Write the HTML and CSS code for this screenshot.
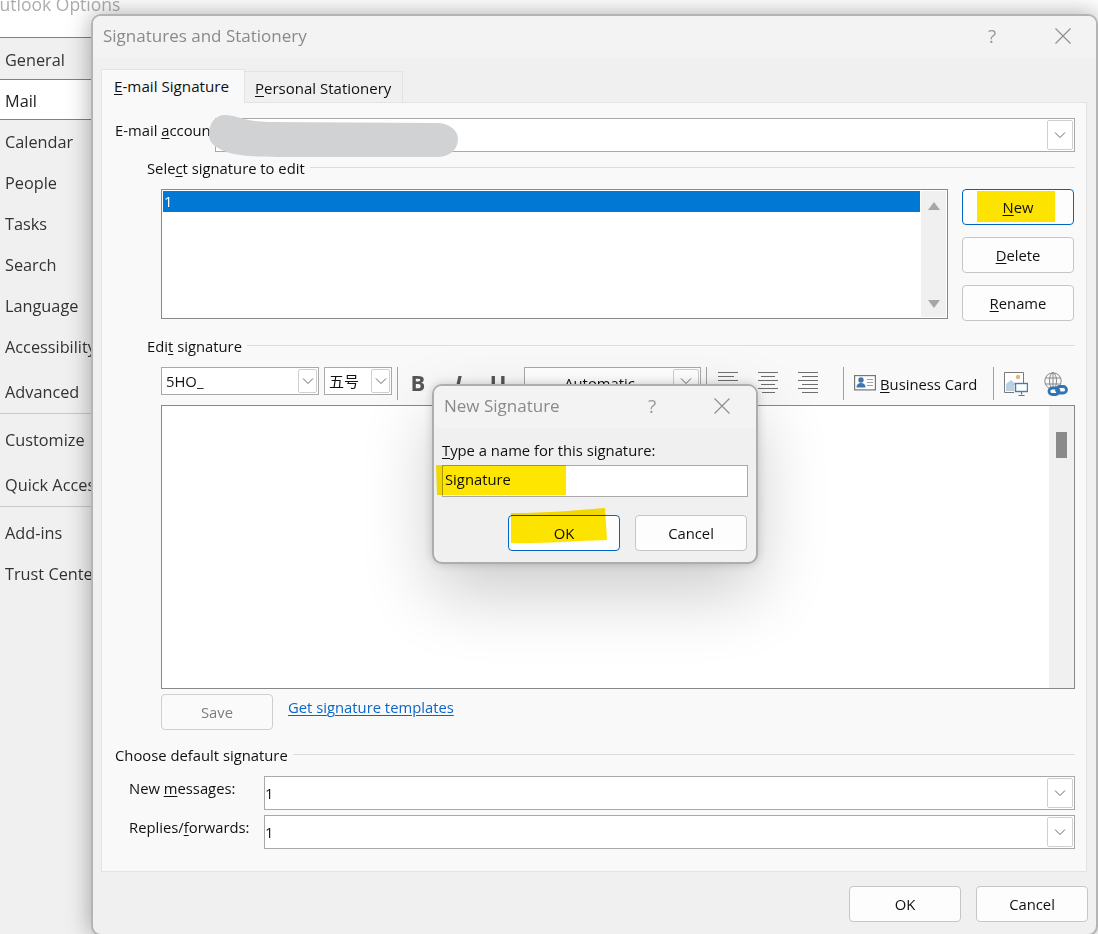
FILE: index.html
```html
<!DOCTYPE html>
<html lang="en">
<head>
<meta charset="utf-8">
<title>Signatures and Stationery</title>
<link rel="stylesheet" href="styles.css">
</head>
<body>
<svg class="defs" width="0" height="0" aria-hidden="true">
  <symbol id="chev" viewBox="0 0 12 8"><path d="M1 1.5 6 6.5 11 1.5" fill="none" stroke="#666" stroke-width="1"/></symbol>
  <symbol id="close" viewBox="0 0 16 16"><path d="M.5.5 15.5 15.5M15.5.5.5 15.5" fill="none" stroke="#8f8f8f" stroke-width="1.2"/></symbol>
</svg>
<div class="desktop">
  <section class="options">
    <div class="options-title">Outlook Options</div>
    <nav class="nav">
      <div class="nav-item nav-first">General</div>
      <div class="nav-item nav-active">Mail</div>
      <div class="nav-item">Calendar</div>
      <div class="nav-item">People</div>
      <div class="nav-item">Tasks</div>
      <div class="nav-item">Search</div>
      <div class="nav-item">Language</div>
      <div class="nav-item">Accessibility</div>
      <div class="nav-item nav-advanced nav-sep">Advanced</div>
      <div class="nav-item nav-customize">Customize</div>
      <div class="nav-item nav-quick nav-sep">Quick Access Toolbar</div>
      <div class="nav-item nav-addins">Add-ins</div>
      <div class="nav-item nav-trust">Trust Center</div>
    </nav>
  </section>

  <section class="dialog">
    <header class="titlebar">
      <span class="title">Signatures and Stationery</span>
      <span class="help help-main">?</span>
      <svg class="close close-main"><use href="#close"/></svg>
    </header>
    <div class="tabs">
      <div class="tab tab-active"><u>E</u>-mail Signature</div>
      <div class="tab tab-plain"><u>P</u>ersonal Stationery</div>
    </div>
    <div class="panel">
      <div class="account-row">
        <span class="account-label">E-mail <u>a</u>ccount:</span>
        <div class="combo account-combo"><span class="chev-btn"><svg class="chev"><use href="#chev"/></svg></span></div>
      </div>

      <div class="group-head group-sub"><span>Sele<u>c</u>t signature to edit</span><i class="rule"></i></div>
      <div class="sig-row">
        <div class="listbox">
          <div class="list-items"><div class="list-selected">1</div></div>
          <div class="list-scroll">
            <svg class="tri" viewBox="0 0 12 8"><path d="M6 0 12 8H0Z" fill="#a6a6a6"/></svg>
            <svg class="tri" viewBox="0 0 12 8"><path d="M0 0H12L6 8Z" fill="#a6a6a6"/></svg>
          </div>
        </div>
        <div class="sig-buttons">
          <button class="btn btn-focus"><u>N</u>ew</button>
          <button class="btn"><u>D</u>elete</button>
          <button class="btn"><u>R</u>ename</button>
        </div>
      </div>

      <div class="group-head group-sub group-edit"><span>Edi<u>t</u> signature</span><i class="rule"></i></div>
      <div class="toolbar">
        <div class="combo tb-font"><span class="combo-text">5HO_</span><span class="chev-btn chev-narrow"><svg class="chev"><use href="#chev"/></svg></span></div>
        <div class="combo tb-size"><span class="combo-text cjk">五号</span><span class="chev-btn chev-narrow"><svg class="chev"><use href="#chev"/></svg></span></div>
        <i class="tb-sep tb-sep-a"></i>
        <span class="fmt">B</span>
        <span class="fmt fmt-i">I</span>
        <span class="fmt fmt-u">U</span>
        <div class="combo tb-color"><span class="color-text">Automatic</span><span class="chev-btn"><svg class="chev"><use href="#chev"/></svg></span></div>
        <i class="tb-sep tb-sep-b"></i>
        <svg class="align" viewBox="0 0 20 21"><path d="M0 .5H20M0 4.500H16M0 8.500H20M0 12.500H16M0 16.500H20M0 20.500H16" stroke="#6e6e6e" fill="none"/></svg>
        <svg class="align" viewBox="0 0 20 21"><path d="M0 .5H20M3 4.500H17M0 8.500H20M3 12.500H17M0 16.500H20M4 20.500H17" stroke="#6e6e6e" fill="none"/></svg>
        <svg class="align" viewBox="0 0 20 21"><path d="M0 .5H20M4 4.500H20M0 8.500H20M4 12.500H20M0 16.500H20M4 20.500H20" stroke="#6e6e6e" fill="none"/></svg>
        <i class="tb-sep tb-sep-c"></i>
        <svg class="card" viewBox="0 0 22 16"><rect x=".6" y=".6" width="20.800" height="14.300" fill="#fff" stroke="#777" stroke-width="1.200"/><circle cx="7" cy="5" r="2.700" fill="#3f76ad"/><path d="M2.500 12.500c0-3 1.500-4.500 4.500-4.500s4.500 1.500 4.500 4.500z" fill="#3f76ad"/><path d="M13 4.500H19M13 7.500H19M13 10.500H19" stroke="#a0a0a0"/></svg>
        <span class="card-text"><u>B</u>usiness Card</span>
        <i class="tb-sep tb-sep-d"></i>
        <svg class="pic" viewBox="0 0 24 24"><path d="M.5 20.500V.5H19.500V11M.5 20.500H10" fill="#fff" stroke="#7a7a7a"/><circle cx="14" cy="5" r="2.200" fill="#e8b679"/><path d="M2 19V12l5-4 5 4v1H10v6z" fill="#bcd0e2"/><rect x="11.500" y="11.500" width="12" height="8" fill="#fff" stroke="#3f7fb8" stroke-width="1.400"/><path d="M17.500 19.500v3M14.500 23.500H20.500" stroke="#3f7fb8" stroke-width="1.200"/></svg>
        <svg class="web" viewBox="0 0 24 24"><g fill="none" stroke="#7d7d7d" stroke-width=".9"><circle cx="9" cy="9" r="8.200"/><ellipse cx="9" cy="9" rx="3.500" ry="8.200"/><path d="M1.500 6H16.500M1.500 12H16.500M9 1V17"/></g><g fill="none" stroke="#2f74b5" stroke-width="2.800"><rect x="5" y="16" width="10" height="6.500" rx="3.250" fill="#fff"/><rect x="12.500" y="14.500" width="10" height="6.500" rx="3.250"/></g></svg>
      </div>

      <div class="editor">
        <div class="editor-body"></div>
        <div class="editor-scroll"><i class="thumb"></i></div>
      </div>
      <div class="save-row">
        <button class="btn btn-disabled">Save</button>
        <a class="link">Get signature templates</a>
      </div>

      <div class="group-head group-choose"><span>Choose default signature</span><i class="rule"></i></div>
      <div class="default-row">
        <span class="default-label">New <u>m</u>essages:</span>
        <div class="combo default-combo"><span class="combo-text">1</span><span class="chev-btn"><svg class="chev"><use href="#chev"/></svg></span></div>
      </div>
      <div class="default-row default-second">
        <span class="default-label">Replies/<u>f</u>orwards:</span>
        <div class="combo default-combo"><span class="combo-text">1</span><span class="chev-btn"><svg class="chev"><use href="#chev"/></svg></span></div>
      </div>
    </div>
    <footer class="footer">
      <button class="btn">OK</button>
      <button class="btn">Cancel</button>
    </footer>
  </section>

  <svg class="blot" viewBox="0 0 250 44"><path d="M16 0C28 0 32 6 60 7L228 8C240 8 249 15 249 24C249 35 240 42 228 42L70 42C40 42 25 40 15 36C5 32 0 27 0 20C0 8 6 0 16 0Z" fill="#d1d2d4"/></svg>

  <section class="newsig">
    <header class="newsig-title">
      <span class="title">New Signature</span>
      <span class="help help-new">?</span>
      <svg class="close close-new"><use href="#close"/></svg>
    </header>
    <div class="newsig-body">
      <div class="newsig-label"><u>T</u>ype a name for this signature:</div>
      <div class="newsig-input">Signature</div>
      <div class="newsig-buttons">
        <button class="btn btn-focus">OK</button>
        <button class="btn">Cancel</button>
      </div>
    </div>
  </section>

  <svg class="marker marker-new" viewBox="0 0 78 31"><rect width="78" height="31"/></svg>
  <svg class="marker marker-input" viewBox="0 0 131 31"><path d="M0 1H130V31H1Z"/></svg>
  <svg class="marker marker-ok" viewBox="0 0 98 37"><path d="M1 5C30 5 60 3 95 0L97 32C60 33 30 36 1 35Z"/></svg>
</div>
</body>
</html>
```
FILE: styles.css
```css
* { box-sizing: border-box; }
html, body { margin: 0; height: 100%; }
body { background: #fff; overflow: hidden; font: 14.8px/20px "Open Sans", "Noto Sans", sans-serif; color: #111; }
.defs { position: absolute; }
u { text-underline-offset: 2px; text-decoration-thickness: 1px; }
i { display: block; font-style: normal; }

.desktop { position: relative; width: 1098px; height: 934px; overflow: hidden; background: #fff; }

/* Back window */
.options { width: 130px; height: 934px; white-space: nowrap; overflow: hidden; }
.options-title { height: 38px; margin-left: -14px; font-size: 17.5px; line-height: 8px; color: #adadad; border-bottom: 1px solid #808080; }
.nav { height: 896px; font-size: 16.3px; color: #333; background: #f0f0f0; }
.nav-item { height: 41px; line-height: 45px; padding-left: 5px; }
.nav-first { height: 42px; line-height: 44px; border-bottom: 1px solid #808080; }
.nav-active { height: 40px; line-height: 43px; background: #fff; color: #222; border-bottom: 1px solid #808080; }
.nav-sep { border-bottom: 1px solid #c8c8c8; }
.nav-advanced { height: 48px; line-height: 53px; }
.nav-customize { height: 46px; line-height: 52px; }
.nav-quick { height: 47px; line-height: 51px; }
.nav-addins { height: 46px; line-height: 52px; }
.nav-trust { line-height: 43px; }

/* Main dialog */
.dialog { position: absolute; left: 91px; top: 14px; width: 1007px; height: 922px; display: flex; flex-direction: column; background: #f0f0f0; border: 2px solid #b4b4b4; border-radius: 10px; box-shadow: 0 0 24px rgba(0,0,0,.34); overflow: hidden; }
.titlebar { position: relative; flex: none; height: 42px; background: #f3f3f3; }
.title { display: block; padding: 9px 0 0 10px; font-size: 17px; line-height: 22px; color: #8a8a8a; }
.help { position: absolute; top: 9px; font-size: 19px; line-height: 22px; color: #9a9a9a; }
.close { position: absolute; top: 12px; width: 16px; height: 16px; }
.help-main { left: 895px; }
.close-main { left: 962px; }

.tabs { display: flex; align-items: flex-end; height: 44px; margin-left: 8px; flex: none; }
.tab { height: 31px; border: 1px solid #e3e3e3; border-bottom: 0; border-left: 0; font-size: 15px; }
.tab-plain { width: 158px; padding: 6px 0 0 10px; }
.tab-active { height: 34px; width: 144px; padding: 6px 0 0 12px; margin-bottom: -1px; font-size: 15.2px; background: #f9f9f9; border-left: 1px solid #e3e3e3; position: relative; z-index: 1; }

.panel { flex: none; width: 986px; height: 770px; margin-left: 8px; padding: 15px 11px 0 13px; background: #f9f9f9; border: 1px solid #e3e3e3; }
.account-row { display: flex; align-items: flex-start; height: 34px; }
.account-label { width: 100px; flex: none; margin-top: 2px; white-space: nowrap; }
.combo { position: relative; display: flex; align-items: center; background: #fff; border: 1px solid #a9a9a9; }
.account-combo { flex: 1; height: 34px; }
.chev-btn { position: absolute; right: 1px; top: 1px; bottom: 1px; width: 26px; display: flex; align-items: center; justify-content: center; background: #fff; border: 1px solid #cfcfcf; border-radius: 2px; }
.chev-narrow { width: 19px; }
.chev { width: 12px; height: 8px; }
.combo-text { padding-left: 4px; }
.cjk { font-family: "Noto Sans CJK SC", sans-serif; font-size: 15px; }

.group-head { display: flex; align-items: center; gap: 5px; white-space: nowrap; }
.rule { flex: 1; height: 1px; background: #dcdcdc; margin-top: -2px; }
.group-sub { padding-left: 32px; margin-top: 6px; }
.group-edit { margin-top: 15px; }
.group-choose { margin-top: 15px; }

.sig-row { display: flex; align-items: flex-start; gap: 14px; margin: 11px 0 0 46px; }
.listbox { display: flex; width: 787px; height: 130px; padding: 1px; background: #fff; border: 1px solid #85888c; }
.list-items { flex: 1; }
.list-selected { height: 21px; padding-left: 1px; line-height: 21px; background: #0078d4; color: #fff; }
.list-scroll { flex: none; width: 25px; margin-left: 1px; background: #f0f0f0; display: flex; flex-direction: column; justify-content: space-between; align-items: center; padding: 11px 0 9px; }
.tri { width: 12px; height: 8px; }
.sig-buttons { display: flex; flex-direction: column; gap: 12px; }

.btn { display: block; width: 112px; height: 36px; padding: 0; font: inherit; color: #111; background: #fdfdfd; border: 1px solid #c6c6c6; border-radius: 4px; }
.btn-focus { border-color: #0067c0; }
.btn-disabled { color: #7d7d7d; border-color: #cfcfcf; background: #fafafa; }

.toolbar { display: flex; align-items: flex-start; height: 33px; margin: 11px 0 0 46px; }
.tb-font { width: 158px; height: 28px; }
.tb-size { width: 68px; height: 28px; margin-left: 5px; }
.tb-sep { flex: none; width: 1px; height: 33px; background: #a0a0a0; }
.tb-sep-a { margin-left: 5px; }
.fmt { flex: none; width: 40px; text-align: center; font-size: 22px; line-height: 30px; font-weight: 700; color: #555; }
.fmt-i { font-style: italic; }
.fmt-u { text-decoration: underline; }
.tb-color { width: 177px; height: 28px; margin-left: 6px; justify-content: center; padding: 4px 28px 0 0; }
.color-text { padding-left: 2px; }
.tb-sep-b { margin-left: 5px; }
.align { flex: none; width: 20px; height: 21px; margin: 5px 0 0 20px; }
.tb-sep-b + .align { margin-left: 11px; }
.tb-sep-c { margin-left: 25px; }
.card { flex: none; width: 22px; height: 16px; margin: 8px 0 0 10px; }
.card-text { margin: 7px 0 0 4px; }
.tb-sep-d { margin-left: 16px; }
.pic { flex: none; width: 24px; height: 24px; margin: 5px 0 0 10px; }
.web { flex: none; width: 24px; height: 24px; margin: 5px 0 0 16px; }

.editor { display: flex; height: 284px; margin: 5px 0 0 46px; background: #fff; border: 1px solid #85888c; }
.editor-body { flex: 1; }
.editor-scroll { flex: none; width: 25px; padding: 26px 0 0 7px; background: #f0f0f0; }
.thumb { width: 11px; height: 26px; background: #8a8a8a; }

.save-row { display: flex; align-items: flex-start; gap: 15px; margin: 5px 0 0 46px; }
.link { margin-top: 3px; color: #0a66c8; text-decoration: underline; text-decoration-thickness: 1px; text-underline-offset: 2px; }

.default-row { display: flex; align-items: flex-start; margin: 11px 0 0 14px; }
.default-second { margin-top: 5px; }
.default-label { width: 135px; flex: none; margin-top: 2px; }
.default-combo { flex: 1; height: 34px; }
.default-combo .combo-text { padding: 0; }

.footer { display: flex; justify-content: flex-end; gap: 15px; padding: 14px 8px 0 0; }

/* Redaction */
.blot { position: absolute; left: 209px; top: 115px; width: 250px; height: 44px; }

/* New Signature dialog */
.newsig { position: absolute; left: 432px; top: 384px; width: 326px; height: 180px; background: #f0f0f0; border: 2px solid #adadad; border-radius: 10px; box-shadow: 0 0 10px rgba(0,0,0,.18), 0 30px 70px rgba(0,0,0,.2); overflow: hidden; }
.newsig-title { position: relative; height: 42px; background: #f3f3f3; }
.help-new { left: 214px; top: 9px; }
.close-new { left: 280px; top: 12px; }
.newsig-body { padding: 12px 8px 0 8px; }
.newsig-label { height: 20px; }
.newsig-input { height: 32px; margin-top: 5px; padding: 3px 0 0 2px; background: #fff; border: 1px solid #a9a9a9; }
.newsig-buttons { display: flex; justify-content: flex-end; gap: 15px; margin: 18px 1px 0 0; }

/* Marker strokes */
.marker { position: absolute; fill: #ffe600; mix-blend-mode: multiply; }
.marker-new { left: 977px; top: 191px; width: 78px; height: 31px; }
.marker-input { left: 436px; top: 464px; width: 131px; height: 31px; }
.marker-ok { left: 510px; top: 508px; width: 98px; height: 37px; }
```
